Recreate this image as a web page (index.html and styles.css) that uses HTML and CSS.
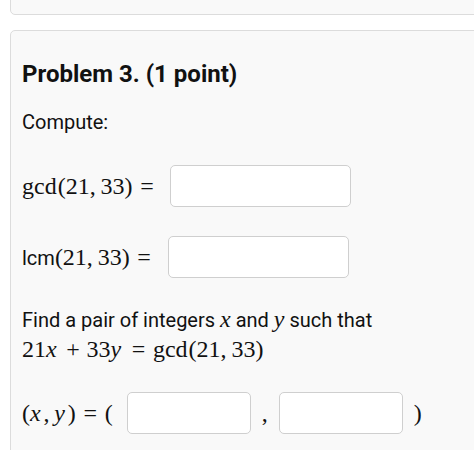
FILE: index.html
```html
<!DOCTYPE html>
<html>
<head>
<meta charset="utf-8">
<title>Problem 3</title>
<link rel="stylesheet" href="styles.css">
</head>
<body>
<div class="card card-top"></div>
<div class="card card-main">
  <h3 class="title">Problem 3. (1 point)</h3>
  <p class="text">Compute:</p>
  <div class="row">
    <span class="math"><span class="rm">gcd</span>(21,<span class="thin"></span>33)<span class="rel">=</span></span>
    <input class="answer answer-wide" type="text" aria-label="gcd">
  </div>
  <div class="row row-lcm">
    <span class="math"><span class="sans">lcm</span>(21,<span class="thin"></span>33)<span class="rel">=</span></span>
    <input class="answer answer-wide" type="text" aria-label="lcm">
  </div>
  <p class="text text-find">Find a pair of integers <span class="math it">x</span> and <span class="math it">y</span> such that<br><span class="math">21<span class="mi">x</span><span class="bin">+</span>33<span class="mi">y</span><span class="rel">=</span><span class="rm">gcd</span>(21,<span class="thin"></span>33)</span></p>
  <div class="row row-pair">
    <span class="math">(<span class="mi">x</span>,<span class="thin"></span><span class="mi">y</span>)<span class="rel">=</span>(</span>
    <input class="answer answer-narrow answer-first" type="text" aria-label="x">
    <span class="math sep">,</span>
    <input class="answer answer-narrow" type="text" aria-label="y">
    <span class="math sep">)</span>
  </div>
</div>
</body>
</html>
```

FILE: styles.css
```css
html, body {
  margin: 0;
  padding: 0;
  background: #ffffff;
  overflow: hidden;
}

body {
  font-family: Roboto, "Liberation Sans", sans-serif;
  color: #111;
}

.card {
  background: #f9f9f9;
  border: 1px solid #dcdcdc;
  border-radius: 5px;
  margin-left: 10px;
  margin-right: -20px;
}

.card-top {
  height: 33px;
  margin-top: -20px;
}

.card-main {
  margin-top: 15px;
  padding: 29px 11px 80px 11px;
}

.title {
  margin: 0;
  font-size: 24px;
  font-weight: 700;
  line-height: 28px;
  color: #111;
}

.text {
  margin: 20px 0 0 0;
  font-size: 20px;
  line-height: 28px;
}

.text-find {
  margin-top: 27px;
  line-height: 30px;
}

.text-find .math {
  line-height: 24px;
}

.row {
  display: flex;
  align-items: center;
  margin-top: 29px;
  height: 42px;
}

.row-pair {
  margin-top: 27px;
}

.math {
  font-family: "Liberation Serif", "DejaVu Serif", serif;
  font-size: 24px;
  color: #111;
  white-space: nowrap;
}

.it {
  font-style: italic;
}

.mi {
  font-style: italic;
  padding-right: 0.12em;
}

.sans {
  font-family: Roboto, "Liberation Sans", sans-serif;
  font-size: 20px;
}

.rm {
  margin-right: 1px;
}

.thin {
  display: inline-block;
  width: 0.2em;
}

.rel {
  margin: 0 0.32em;
}

.bin {
  margin: 0 0.28em;
}

.answer {
  box-sizing: border-box;
  height: 42px;
  margin: 0 0 0 11px;
  padding: 0 6px;
  border: 1px solid #cfcfcf;
  border-radius: 5px;
  background: #ffffff;
  font-size: 18px;
}

.answer-wide {
  width: 181px;
  margin-left: 9px;
}

.answer-narrow {
  width: 124px;
}

.answer-first {
  margin-left: 14px;
}

.sep {
  margin-left: 11px;
}
```
